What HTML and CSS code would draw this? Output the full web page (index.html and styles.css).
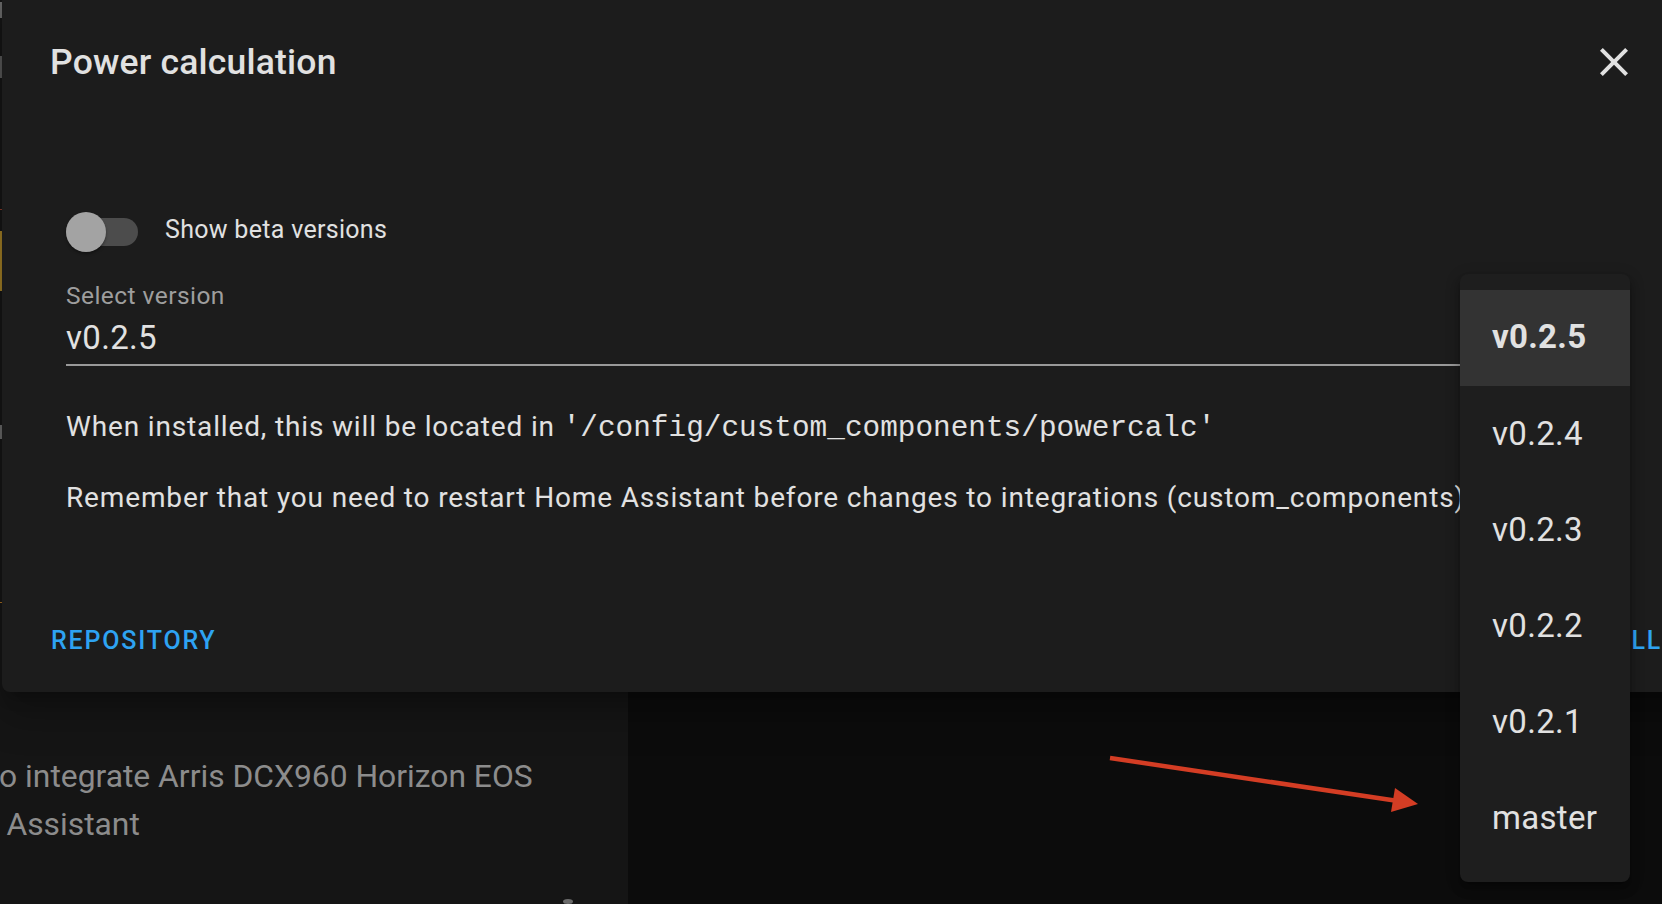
FILE: index.html
```html
<!DOCTYPE html>
<html lang="en">
<head>
<meta charset="utf-8">
<title>Power calculation</title>
<link rel="stylesheet" href="styles.css">
</head>
<body>
<div class="page">
  <div class="bg">
    <div class="bg-left">
      <div class="edge">
        <span class="bit bit-text1"></span>
        <span class="bit bit-line"></span>
        <span class="bit bit-red"></span>
        <span class="bit bit-gold"></span>
        <span class="bit bit-text2"></span>
        <span class="bit bit-orange"></span>
      </div>
      <div class="card-text">
        <div class="line line-1">to integrate Arris DCX960 Horizon EOS</div>
        <div class="line line-2">Home Assistant</div>
      </div>
      <span class="scroll-dot"></span>
    </div>
    <div class="bg-right"></div>
  </div>

  <div class="dialog">
    <header class="dlg-header">
      <h2 class="dlg-title">Power calculation</h2>
      <button class="close-btn" aria-label="Close">
        <svg viewBox="0 0 24 24"><path d="M19,6.41L17.59,5L12,10.59L6.41,5L5,6.41L10.59,12L5,17.59L6.41,19L12,13.41L17.59,19L19,17.59L13.41,12L19,6.41Z"/></svg>
      </button>
    </header>
    <div class="dlg-content">
      <div class="toggle-row">
        <span class="switch"><span class="track"></span><span class="knob"></span></span>
        <span class="toggle-label">Show beta versions</span>
      </div>
      <div class="select">
        <div class="select-label">Select version</div>
        <div class="select-value">v0.2.5</div>
      </div>
      <p class="note note-first">When installed, this will be located in <code class="path">'/config/custom_components/powercalc'</code></p>
      <p class="note">Remember that you need to restart Home Assistant before changes to integrations (custom_components)</p>
    </div>
    <div class="dlg-actions">
      <button class="text-btn">Repository</button>
      <button class="text-btn">Install</button>
    </div>
  </div>

  <ul class="menu">
    <li class="menu-item selected">v0.2.5</li>
    <li class="menu-item">v0.2.4</li>
    <li class="menu-item">v0.2.3</li>
    <li class="menu-item">v0.2.2</li>
    <li class="menu-item">v0.2.1</li>
    <li class="menu-item">master</li>
  </ul>

  <svg class="arrow" viewBox="0 0 1662 904" width="1662" height="904">
    <line x1="1110" y1="758" x2="1398" y2="801" stroke="#d43d24" stroke-width="4.5"/>
    <polygon points="1418,804 1395,788 1391,812" fill="#d43d24"/>
  </svg>
</div>
</body>
</html>
```

FILE: styles.css
```css
* { box-sizing: border-box; }

html, body {
  margin: 0;
  padding: 0;
  width: 1662px;
  height: 904px;
  overflow: hidden;
  background: #0c0c0c;
  font-family: Roboto, "Noto Sans", sans-serif;
  color: #e1e1e1;
}

.page {
  position: relative;
  width: 1662px;
  height: 904px;
  overflow: hidden;
}

/* ---------- page behind the dialog ---------- */
.bg {
  display: flex;
  height: 904px;
}

.bg-left {
  width: 628px;
  background: #151515;
  display: flex;
  flex-direction: column;
}

.bg-right {
  flex: 1;
  background: #0c0c0c;
}

.edge {
  height: 692px;
  width: 2px;
  display: flex;
  flex-direction: column;
  flex-shrink: 0;
}

.bit { display: block; width: 2px; }
.bit-text1 { margin-top: 2px; height: 16px; background: #6a6a6a; }
.bit-line { margin-top: 38px; height: 22px; background: #555; }
.bit-red { margin-top: 131px; height: 1px; background: #8a3a2a; }
.bit-gold { margin-top: 21px; height: 60px; background: #9c7a24; }
.bit-text2 { margin-top: 134px; height: 14px; background: #666; }
.bit-orange { margin-top: 163px; height: 1px; background: #a06a20; }

.card-text {
  margin-top: 60px;
  font-size: 31.8px;
  line-height: 48.4px;
  color: #8c8c8c;
  white-space: nowrap;
}

.line-1 { margin-left: -11px; }
.line-2 { margin-left: -87px; }

.scroll-dot {
  display: block;
  width: 10px;
  height: 10px;
  border-radius: 50%;
  background: #6b6b6b;
  margin: 50px 0 0 563px;
}

/* ---------- dialog ---------- */
.dialog {
  position: absolute;
  left: 2px;
  top: -20px;
  width: 1700px;
  height: 712px;
  background: #1c1c1c;
  border-radius: 8px;
  display: flex;
  flex-direction: column;
  box-shadow: 0 11px 15px -7px rgba(0,0,0,.3), 0 24px 38px 3px rgba(0,0,0,.2);
}

.dlg-header {
  display: flex;
  align-items: center;
  justify-content: space-between;
  padding: 58px 64px 0 48px;
}

.dlg-title {
  margin: 0;
  font-size: 35.5px;
  line-height: 40px;
  font-weight: 500;
  color: #e1e1e1;
  letter-spacing: 0.2px;
}

.close-btn {
  width: 48px;
  height: 48px;
  padding: 0;
  border: 0;
  background: none;
  display: flex;
  align-items: center;
  justify-content: center;
}

.close-btn svg {
  width: 48px;
  height: 48px;
  fill: #e1e1e1;
}

.dlg-content {
  padding: 0 100px 0 64px;
}

.toggle-row {
  margin-top: 122px;
  height: 48px;
  display: flex;
  align-items: center;
  gap: 27px;
}

.switch {
  position: relative;
  width: 72px;
  height: 40px;
  display: flex;
  align-items: center;
  flex-shrink: 0;
}

.track {
  width: 72px;
  height: 28px;
  border-radius: 14px;
  background: #4c4c4c;
}

.knob {
  position: absolute;
  left: 0;
  top: 0;
  width: 40px;
  height: 40px;
  border-radius: 50%;
  background: #a3a3a3;
  box-shadow: 0 2px 3px rgba(0,0,0,.35);
}

.toggle-label {
  font-size: 25px;
  line-height: 40px;
  margin-top: -4px;
  letter-spacing: 0.3px;
}

.select {
  margin-top: 25px;
  padding-bottom: 6px;
  border-bottom: 2px solid #999;
}

.select-label {
  font-size: 24.5px;
  line-height: 30px;
  color: #9e9e9e;
  letter-spacing: 0.45px;
}

.select-value {
  margin-top: 7px;
  font-size: 33px;
  line-height: 40px;
  letter-spacing: 0.3px;
}

.note {
  margin: 29px 0 0;
  font-size: 28px;
  line-height: 40px;
  letter-spacing: 0.85px;
  white-space: nowrap;
}

.note-first { margin-top: 41px; }

.path {
  font-family: "Liberation Mono", monospace;
  font-size: 29.4px;
  letter-spacing: 0;
}

.dlg-actions {
  margin-top: auto;
  display: flex;
  justify-content: space-between;
  padding: 0 40px 33px 49px;
}

.text-btn {
  padding: 0;
  border: 0;
  background: none;
  font-family: inherit;
  font-size: 25px;
  line-height: 36px;
  font-weight: 500;
  letter-spacing: 1.8px;
  text-transform: uppercase;
  color: #2ea3f2;
}

/* ---------- dropdown menu ---------- */
.menu {
  position: absolute;
  left: 1460px;
  top: 274px;
  width: 170px;
  margin: 0;
  padding: 16px 0;
  list-style: none;
  background: #1e1e1e;
  border-radius: 8px;
  box-shadow: 0 5px 5px -3px rgba(0,0,0,.25), 0 8px 10px 1px rgba(0,0,0,.18), 0 3px 14px 2px rgba(0,0,0,.15);
}

.menu-item {
  height: 96px;
  line-height: 96px;
  padding-left: 32px;
  font-size: 33px;
  color: #e1e1e1;
  letter-spacing: 0.3px;
}

.menu-item.selected {
  background: #333;
  font-weight: 700;
  line-height: 94px;
}

/* ---------- annotation ---------- */
.arrow {
  position: absolute;
  left: 0;
  top: 0;
  pointer-events: none;
}
```
